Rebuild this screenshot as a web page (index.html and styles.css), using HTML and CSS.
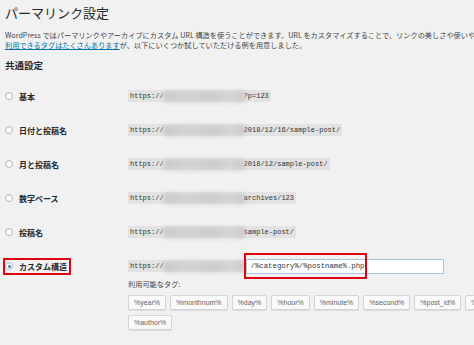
FILE: index.html
```html
<!DOCTYPE html>
<html lang="ja">
<head>
<meta charset="utf-8">
<title>パーマリンク設定</title>
<link rel="stylesheet" href="styles.css">
</head>
<body>
<div class="page">
  <h1 class="title">パーマリンク設定</h1>
  <p class="desc">WordPress ではパーマリンクやアーカイブにカスタム URL 構造を使うことができます。URL をカスタマイズすることで、リンクの美しさや使いやすさ、前方互換性などを改善できます。<br><a class="link" href="#">利用できるタグはたくさんあります</a>が、以下にいくつか試していただける例を用意しました。</p>
  <h2 class="section">共通設定</h2>
  <div class="rows">
    <div class="row">
      <label class="opt"><span class="radio"></span><span>基本</span></label>
      <code class="sample">https://<span class="blur"></span>?p=123</code>
    </div>
    <div class="row">
      <label class="opt"><span class="radio"></span><span>日付と投稿名</span></label>
      <code class="sample">https://<span class="blur"></span>2018/12/16/sample-post/</code>
    </div>
    <div class="row">
      <label class="opt"><span class="radio"></span><span>月と投稿名</span></label>
      <code class="sample">https://<span class="blur"></span>2018/12/sample-post/</code>
    </div>
    <div class="row">
      <label class="opt"><span class="radio"></span><span>数字ベース</span></label>
      <code class="sample">https://<span class="blur"></span>archives/123</code>
    </div>
    <div class="row">
      <label class="opt"><span class="radio"></span><span>投稿名</span></label>
      <code class="sample">https://<span class="blur"></span>sample-post/</code>
    </div>
    <div class="row-custom">
      <div class="opt-col">
        <label class="opt opt-marked"><span class="radio checked"></span><span>カスタム構造</span></label>
      </div>
      <div class="custom-body">
        <div class="custom-line">
          <code class="sample">https://<span class="blur"></span></code><span class="input-wrap"><input class="struct" type="text" value="/%category%/%postname%.php"><span class="caret"></span><span class="mark"></span></span>
        </div>
        <div class="tags-label">利用可能なタグ:</div>
        <div class="tags">
          <button class="tag">%year%</button>
          <button class="tag">%monthnum%</button>
          <button class="tag">%day%</button>
          <button class="tag">%hour%</button>
          <button class="tag">%minute%</button>
          <button class="tag">%second%</button>
          <button class="tag">%post_id%</button>
          <button class="tag">%postname%</button>
          <button class="tag">%category%</button>
          <button class="tag">%author%</button>
        </div>
      </div>
    </div>
  </div>
</div>
</body>
</html>
```
FILE: styles.css
```css
html, body {
  margin: 0;
  padding: 0;
  background: #f1f1f1;
  overflow: hidden;
}
body {
  width: 474px;
  height: 345px;
  font-family: "Noto Sans CJK JP", "Noto Sans", sans-serif;
  color: #444;
}
.page {
  padding: 5px 0 0 5px;
  width: 600px;
}
.title {
  margin: 0;
  font-size: 13px;
  line-height: 16px;
  font-weight: 400;
  color: #23282d;
}
.desc {
  margin: 9px 0 0;
  font-size: 7.2px;
  line-height: 10px;
  white-space: nowrap;
  color: #444;
}
.link {
  color: #0073aa;
  text-decoration: underline;
}
.section {
  margin: 8px 0 7px;
  font-size: 9.5px;
  line-height: 14px;
  font-weight: 700;
  color: #23282d;
}
.rows {
  display: flex;
  flex-direction: column;
}
.row {
  height: 34px;
  display: flex;
  align-items: center;
}
.opt {
  width: 123px;
  display: flex;
  align-items: center;
  font-size: 8px;
  line-height: 13px;
  font-weight: 700;
  color: #23282d;
}
.radio {
  width: 8px;
  height: 8px;
  box-sizing: border-box;
  border: 1px solid #b4b9be;
  border-radius: 50%;
  background: #fff;
  box-shadow: inset 0 1px 1px rgba(0,0,0,0.08);
  margin-right: 6px;
  display: flex;
  align-items: center;
  justify-content: center;
  flex: none;
}
.radio.checked::after {
  content: "";
  width: 3px;
  height: 3px;
  border-radius: 50%;
  background: #1e8cbe;
}
.sample {
  display: inline-flex;
  align-items: center;
  height: 12px;
  padding: 0 2px;
  background: #e2e2e2;
  font-family: "Liberation Mono", "DejaVu Sans Mono", monospace;
  font-size: 7px;
  line-height: 12px;
  color: #333;
}
.blur {
  display: inline-block;
  width: 80px;
  height: 11px;
  background: linear-gradient(90deg, #c9c9c9 0%, #d3d3d3 30%, #cbcbcb 60%, #d5d5d5 85%, #c6c6c6 100%);
  filter: blur(2px);
}
.row-custom {
  display: flex;
  padding-top: 3px;
}
.opt-col {
  width: 123px;
  height: 28px;
  display: flex;
  align-items: center;
}
.opt-marked {
  width: auto;
  padding-right: 2px;
  outline: 2px solid #e2000f;
}
.custom-body {
  display: flex;
  flex-direction: column;
}
.custom-line {
  height: 28px;
  display: flex;
  align-items: center;
}
.input-wrap {
  position: relative;
  display: inline-flex;
  align-items: center;
}
.struct {
  width: 198px;
  height: 15px;
  box-sizing: border-box;
  margin: 0;
  padding: 0 4px;
  border: 1px solid #a9c4df;
  background: #fff;
  font-family: "Liberation Mono", "DejaVu Sans Mono", monospace;
  font-size: 7.3px;
  color: #32373c;
  outline: none;
}
.caret {
  position: absolute;
  left: 119px;
  top: 3px;
  width: 1px;
  height: 9px;
  background: #333;
}
.mark {
  position: absolute;
  left: -2px;
  top: -6px;
  width: 123px;
  height: 26px;
  box-sizing: border-box;
  border: 2px solid #e2000f;
}
.tags-label {
  margin-top: -1px;
  font-size: 7.2px;
  line-height: 10px;
  color: #444;
}
.tags {
  margin-top: 6px;
  width: 450px;
  display: flex;
  flex-wrap: wrap;
  gap: 5px 4px;
}
.tag {
  height: 15px;
  box-sizing: border-box;
  margin: 0;
  padding: 0 5px;
  border: 1px solid #d4d4d4;
  border-radius: 2px;
  background: #f9f9f9;
  box-shadow: 0 1px 0 #dcdcdc;
  font-family: "Liberation Sans", Arial, sans-serif;
  font-size: 7px;
  line-height: 13px;
  color: #666;
}
```
